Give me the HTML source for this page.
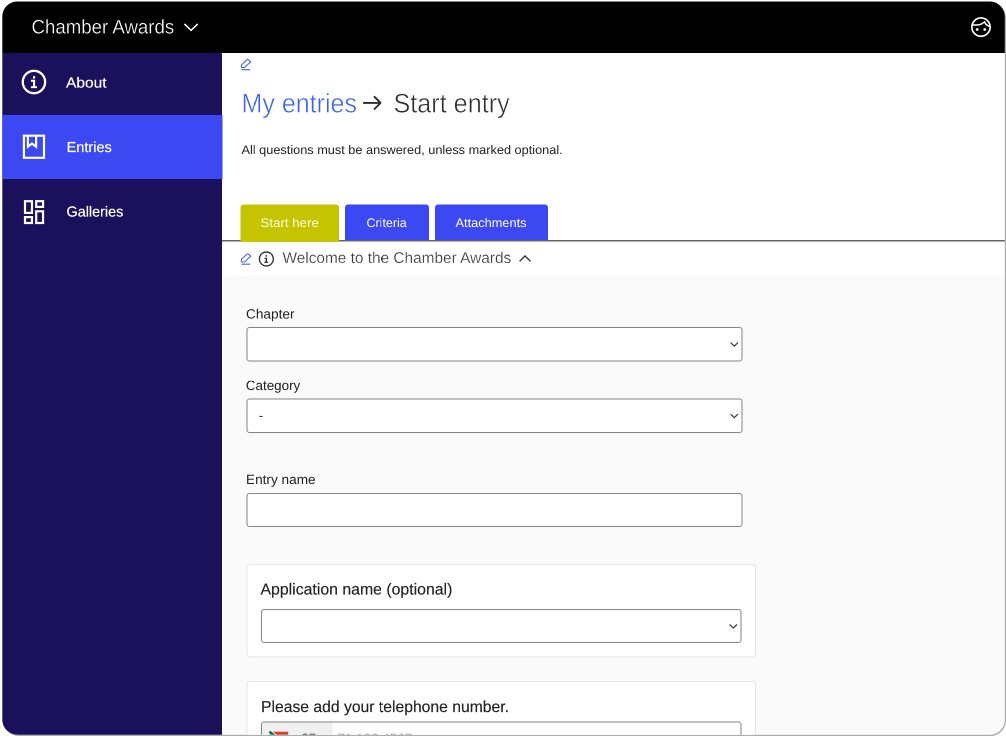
<!DOCTYPE html>
<html lang="en">
<head>
<meta charset="utf-8">
<title>Chamber Awards – Start entry</title>
<style>
*{box-sizing:border-box;margin:0;padding:0}
html,body{width:1006px;height:739px;overflow:hidden;background:#fff}
body{font-family:"Liberation Sans",Arial,sans-serif;position:relative;color:#222;text-rendering:geometricPrecision}
.abs{position:absolute}
#frameborder{position:absolute;left:3.5px;top:2.5px;width:1002.5px;height:733.5px;border-radius:15.5px;background:#adadad}
#scaler{position:absolute;left:0;top:0;width:2012px;height:1478px;transform-origin:0 0;transform:scale(0.5);will-change:transform;overflow:hidden}
#zoom{position:absolute;left:0;top:0;width:1006px;height:739px;zoom:2;overflow:hidden}
#clip{position:absolute;left:0;top:0;width:1006px;height:739px;overflow:hidden;background:#fff;clip-path:inset(1.5px 1.2px 4.3px 2.3px round 15px)}
#header{left:0;top:0;width:1006px;height:53px;background:#000}
#sidebar{left:0;top:53px;width:222px;height:690px;background:#1a105c}
#active{left:0;top:115px;width:222.25px;height:64px;background:#3c48f2}
.t{position:absolute;display:block;white-space:nowrap;line-height:1;font-weight:normal;text-decoration:none;transform-origin:0 0}
#panel{left:224px;top:276px;width:780px;height:457px;background:#fafafa}
.tab{position:absolute;top:204.5px;height:35.5px;border-radius:3px 3px 0 0;background:#3c48f2}
.field{position:absolute;background:#fff;border:1px solid #848484;border-radius:3px}
.card{position:absolute;background:#fff;border:1px solid #e5e5e5;border-radius:3.5px}
svg{position:absolute;overflow:visible}
</style>
</head>
<body>
<div id="scaler"><div id="zoom">
<div id="frameborder"></div>
<div id="clip">
  <div id="header" class="abs"></div>
  <div id="sidebar" class="abs"></div>
  <div id="active" class="abs"></div>

  <!-- header + sidebar icons, drawn in page coordinates -->
  <svg style="left:0;top:0" width="1006" height="739" viewBox="0 0 1006 739">
    <g fill="none" stroke="#fff">
      <path d="M184.4 23.9 L191.1 30.3 L197.8 23.9" stroke-width="1.5"/>
      <circle cx="981" cy="27.1" r="9.15" stroke-width="1.65"/>
      <path d="M972.2 24.9 C975 25.1 979.4 25 981.6 23.9 C983 23.2 983.8 22.2 984.6 21.8 C985 22.8 985.3 23.6 986 24.3 C987.2 25.5 988.6 26.1 990 26.4" stroke-width="1.5" stroke-linejoin="round"/>
      <circle cx="33.95" cy="82" r="11.2" stroke-width="2.3"/>
      <rect x="23.9" y="135.7" width="20.1" height="22.1" stroke-width="2.2"/>
      <rect x="25" y="201.2" width="6.95" height="11.7" stroke-width="2.2"/>
      <rect x="36.2" y="201.2" width="6.85" height="5.7" stroke-width="2.2"/>
      <rect x="25" y="217.1" width="6.95" height="5.9" stroke-width="2.2"/>
      <rect x="36.2" y="211.3" width="6.85" height="11.7" stroke-width="2.2"/>
    </g>
    <g fill="#fff">
      <circle cx="977.2" cy="29.5" r="1.35"/><circle cx="984.7" cy="29.5" r="1.35"/>
      <rect x="33" y="76.1" width="2.1" height="2.5"/>
      <path d="M30.9 79.8 H35.1 V86.2 H37 V88.1 H30.9 V86.2 H33 V81.8 H30.9 Z"/>
      <path d="M26.8 135.7 V148.9 L32 145 L37.2 148.9 V135.7 H35 V144.4 L32 142.3 L28.9 144.4 V135.7 Z"/>
    </g>
  </svg>

  <!-- main -->
  <div class="abs" style="left:222px;top:240px;width:784px;height:1.5px;background:#666"></div>
  <div class="tab" style="left:240.5px;width:98.5px;height:37.5px;background:#c5c400"></div>
  <div class="tab" style="left:345px;width:83.75px"></div>
  <div class="tab" style="left:435px;width:113px"></div>

  <div id="panel" class="abs"></div>

  <div class="field" style="left:246.5px;top:327px;width:496px;height:34.5px"></div>
  <div class="field" style="left:246.5px;top:398.5px;width:496px;height:34.5px"></div>
  <div class="field" style="left:246.5px;top:493px;width:496px;height:34px"></div>

  <div class="card" style="left:246.5px;top:564px;width:509.5px;height:93.5px"></div>
  <div class="field" style="left:261px;top:609px;width:480.25px;height:34px"></div>

  <div class="card" style="left:246.5px;top:681px;width:509.5px;height:93.5px"></div>
  <div class="field" style="left:261px;top:721.5px;width:480.25px;height:34px;overflow:hidden">
    <div class="abs" style="left:0;top:0;width:70.5px;height:34px;background:#f0f0f0"></div>
  </div>

  <!-- main-area icons, drawn in page coordinates -->
  <svg style="left:0;top:0" width="1006" height="739" viewBox="0 0 1006 739">
    <g fill="none" stroke="#4a6bee" stroke-width="1.1" stroke-linejoin="round">
      <path d="M247.6 59.2 L250.7 61.8 L244.6 67.5 L241.4 67.6 L241.4 65 Z M241.3 69.7 H250.2"/>
      <path d="M247.6 253.6 L250.7 256.2 L244.6 261.9 L241.4 262 L241.4 259.4 Z M241.3 264.2 H250.2"/>
    </g>
    <path d="M363.1 102.9 H380.2 M374 96.3 L380.6 102.9 L374 109.5" fill="none" stroke="#2b2b2b" stroke-width="1.9"/>
    <circle cx="266.35" cy="259" r="6.95" fill="none" stroke="#2b2b2b" stroke-width="1.3"/>
    <rect x="265.6" y="255.1" width="1.4" height="1.5" fill="#2b2b2b"/>
    <path d="M264.5 257.8 H267.1 V261.8 H268.2 V262.9 H264.2 V261.8 H265.6 V258.9 H264.5 Z" fill="#2b2b2b"/>
    <path d="M519.6 261.3 L525 255.9 L530.5 261.3" fill="none" stroke="#2b2b2b" stroke-width="1.3"/>
    <g fill="none" stroke="#444" stroke-width="1.25">
      <path d="M730.6 342.6 L734.3 346.1 L738 342.6"/>
      <path d="M730.6 414.1 L734.3 417.6 L738 414.1"/>
      <path d="M729.6 624.5 L733.3 628 L737 624.5"/>
    </g>
    <!-- flag -->
    <g transform="translate(269.4 731.7)">
      <rect width="18.8" height="6.3" fill="#de3831"/><rect y="6.3" width="18.8" height="6.3" fill="#002395"/>
      <path d="M0 0 L8 6.3 L0 12.6 M8 6.3 H18.8" stroke="#fff" stroke-width="4.4" fill="none"/>
      <path d="M0 0 L8 6.3 L0 12.6 M8 6.3 H18.8" stroke="#007a4d" stroke-width="2.6" fill="none"/>
      <path d="M0 2.4 L5 6.3 L0 10.2 Z" fill="#111"/>
    </g>
  </svg>
  <div class="t" id="title" style="left:31.60px;top:17.46px;font-size:19.7px;-webkit-text-stroke:0.3px #000;color:#fff;transform:scaleX(0.9469)">Chamber Awards</div>
  <a class="t" id="nav1" style="left:65.92px;top:76.01px;font-size:14.5px;-webkit-text-stroke:0.2px #fff;color:#fff;transform:scaleX(1.0691)">About</a>
  <a class="t" id="nav2" style="left:66.63px;top:140.48px;font-size:14.5px;-webkit-text-stroke:0.2px #fff;color:#fff;">Entries</a>
  <a class="t" id="nav3" style="left:66.56px;top:205.02px;font-size:14.5px;-webkit-text-stroke:0.2px #fff;color:#fff;transform:scaleX(0.9928)">Galleries</a>
  <a class="t" id="h1a" style="left:241.30px;top:89.96px;font-size:27.0px;-webkit-text-stroke:0.5px #fff;color:#3d63ee;transform:scaleX(0.9271)">My entries</a>
  <h1 class="t" id="h1b" style="left:393.68px;top:89.96px;font-size:27.0px;-webkit-text-stroke:0.5px #fff;color:#2e2e2e;transform:scaleX(0.9328)">Start entry</h1>
  <p class="t" id="note" style="left:241.37px;top:144.51px;font-size:12.4px;color:#222;transform:scaleX(1.0265)">All questions must be answered, unless marked optional.</p>
  <a class="t" id="tab1" style="left:260.49px;top:217.01px;font-size:12.5px;color:#fdfde2;transform:scaleX(1.0640)">Start here</a>
  <a class="t" id="tab2" style="left:366.39px;top:217.03px;font-size:12.5px;color:#fff;transform:scaleX(0.9986)">Criteria</a>
  <a class="t" id="tab3" style="left:455.56px;top:216.95px;font-size:12.5px;color:#fff;transform:scaleX(1.0224)">Attachments</a>
  <h2 class="t" id="welc" style="left:282.44px;top:249.99px;font-size:15.5px;-webkit-text-stroke:0.2px #fff;color:#3a3a3a;transform:scaleX(0.9930)">Welcome to the Chamber Awards</h2>
  <label class="t" id="l1" style="left:245.75px;top:307.47px;font-size:13.4px;color:#222;transform:scaleX(1.0174)">Chapter</label>
  <label class="t" id="l2" style="left:245.86px;top:379.03px;font-size:13.4px;color:#222;">Category</label>
  <label class="t" id="l3" style="left:245.90px;top:473.01px;font-size:13.4px;color:#222;transform:scaleX(1.0161)">Entry name</label>
  <label class="t" id="l4" style="left:260.42px;top:581.49px;font-size:15.9px;-webkit-text-stroke:0.15px #222;color:#222;transform:scaleX(0.9958)">Application name (optional)</label>
  <label class="t" id="l5" style="left:260.80px;top:698.99px;font-size:15.9px;-webkit-text-stroke:0.15px #222;color:#222;transform:scaleX(0.9880)">Please add your telephone number.</label>
  <span class="t" id="dash" style="left:258.76px;top:408.97px;font-size:13.4px;color:#333;">-</span>
  <span class="t" id="cc" style="left:293.79px;top:731.99px;font-size:13.4px;color:#333;transform:scaleX(0.9656)">+27</span>
  <span class="t" id="ph" style="left:337.40px;top:732.01px;font-size:13.4px;color:#999;transform:scaleX(1.0025)">71 123 4567</span>
</div>
</div></div>
</body>
</html>
